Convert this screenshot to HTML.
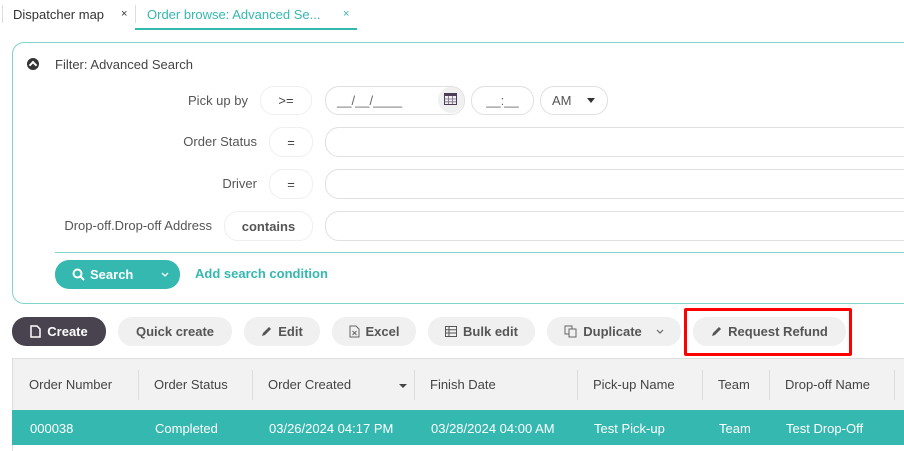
<!DOCTYPE html>
<html><head><style>
*{box-sizing:border-box;margin:0;padding:0}
body{width:904px;height:451px;overflow:hidden;background:#fff;font-family:"Liberation Sans",sans-serif;font-size:13px;color:#444;position:relative}
.a{position:absolute}
.pill{position:absolute;border:1px solid #e0e0e0;border-radius:14px;background:#fff;display:flex;align-items:center;justify-content:center}
.op{border-color:#efefef}
.lbl{position:absolute;text-align:right;color:#555;font-size:13px}
.btn{position:absolute;top:317px;height:29px;border-radius:14px;background:#f0f0f0;color:#555;font-weight:bold;display:flex;align-items:center;justify-content:center;font-size:13px}
.btn svg{margin-right:6px}
.th{position:absolute;top:377px;font-size:13px;color:#444}
.td{position:absolute;top:421px;font-size:13px;color:#fff}
.vd{position:absolute;top:370px;width:1px;height:30px;background:#ddd}
</style></head><body>
<div class="a" style="left:2px;top:5px;width:1px;height:18px;background:#ddd"></div>
<div class="a" style="left:13px;top:7px;color:#333">Dispatcher map</div>
<div class="a" style="left:121px;top:8px;font-size:11px;color:#333">×</div>
<div class="a" style="left:135px;top:5px;width:1px;height:18px;background:#ddd"></div>
<div class="a" style="left:147px;top:7px;color:#35b8b0">Order browse: Advanced Se...</div>
<div class="a" style="left:343px;top:8px;font-size:11px;color:#35b8b0">×</div>
<div class="a" style="left:135px;top:28px;width:222px;height:2px;background:#35b8b0"></div>

<div class="a" style="left:12px;top:42px;width:920px;height:262px;border:1px solid #7fd4cc;border-radius:12px"></div>
<div class="a" style="left:27px;top:58px;width:12px;height:12px;border-radius:50%;background:#333"></div>
<div class="a" style="left:30px;top:62px;width:6px;height:6px;border-left:2px solid #fff;border-top:2px solid #fff;transform:rotate(45deg)"></div>
<div class="a" style="left:55px;top:57px;color:#444">Filter: Advanced Search</div>

<div class="lbl" style="left:100px;width:148px;top:93px">Pick up by</div>
<div class="pill op" style="left:260px;top:86px;width:52px;height:29px;color:#444">&gt;=</div>
<div class="pill" style="left:325px;top:86px;width:140px;height:29px;justify-content:flex-start;padding-left:11px;color:#666">__/__/____</div>
<div class="a" style="left:438px;top:87px;width:26px;height:26px;border-radius:50%;background:#f0f0f0"></div>
<svg class="a" style="left:444px;top:92px" width="13" height="13" viewBox="0 0 13 13"><rect x="0.5" y="1.5" width="12" height="11" fill="none" stroke="#4a3d55"/><rect x="0.5" y="1.5" width="12" height="2.5" fill="#4a3d55"/><path d="M4.5 4v8M8.5 4v8M1 7h11M1 9.8h11" stroke="#7a6a85" stroke-width="0.8"/></svg>
<div class="pill" style="left:471px;top:86px;width:63px;height:29px;color:#666">__:__</div>
<div class="pill" style="left:540px;top:86px;width:68px;height:29px;justify-content:flex-start;padding-left:11px;color:#555">AM</div>
<div class="a" style="left:587px;top:98px;border:4px solid transparent;border-top:5px solid #333"></div>

<div class="lbl" style="left:100px;width:157px;top:134px">Order Status</div>
<div class="pill op" style="left:269px;top:127px;width:44px;height:30px">=</div>
<div class="pill" style="left:325px;top:127px;width:600px;height:30px"></div>
<div class="lbl" style="left:100px;width:157px;top:176px">Driver</div>
<div class="pill op" style="left:269px;top:169px;width:44px;height:30px">=</div>
<div class="pill" style="left:325px;top:169px;width:600px;height:30px"></div>
<div class="lbl" style="left:40px;width:172px;top:218px">Drop-off.Drop-off Address</div>
<div class="pill op" style="left:224px;top:211px;width:89px;height:30px;font-weight:bold;color:#555">contains</div>
<div class="pill" style="left:325px;top:211px;width:600px;height:30px"></div>
<div class="a" style="left:55px;top:252px;width:860px;height:1px;background:#7fd4cc"></div>
<div class="a" style="left:55px;top:260px;width:125px;height:29px;border-radius:14px;background:#35b8b0;color:#fff;font-weight:bold;padding:7px 0 0 35px">Search</div>
<svg class="a" style="left:72px;top:268px" width="13" height="13" viewBox="0 0 13 13"><circle cx="5.5" cy="5.5" r="4" fill="none" stroke="#fff" stroke-width="2"/><path d="M8.5 8.5l3.5 3.5" stroke="#fff" stroke-width="2"/></svg>
<svg class="a" style="left:161px;top:272px" width="8" height="5" viewBox="0 0 8 5"><path d="M1 1l3 3 3-3" fill="none" stroke="#fff" stroke-width="1.3"/></svg>
<div class="a" style="left:195px;top:266px;color:#35b8b0;font-weight:bold">Add search condition</div>

<div class="btn" style="left:12px;width:94px;background:#48434f;color:#fff"><svg width="11" height="13" viewBox="0 0 11 13"><path d="M1 1h6l3 3v8H1z" fill="none" stroke="#fff" stroke-width="1.5"/></svg>Create</div>
<div class="btn" style="left:118px;width:114px">Quick create</div>
<div class="btn" style="left:244px;width:76px"><svg width="11" height="11" viewBox="0 0 11 11"><path d="M1 10l1-3 6-6 2 2-6 6z" fill="#555"/></svg>Edit</div>
<div class="btn" style="left:332px;width:84px"><svg width="11" height="13" viewBox="0 0 11 13"><path d="M1 1h6l3 3v8H1z" fill="none" stroke="#666"/><path d="M3.5 6l4 4M7.5 6l-4 4" stroke="#666"/></svg>Excel</div>
<div class="btn" style="left:428px;width:107px"><svg width="12" height="11" viewBox="0 0 12 11"><rect x="0.5" y="0.5" width="11" height="10" fill="none" stroke="#555"/><path d="M0.5 3.8h11M0.5 7h11M4 0.5v10" stroke="#555"/></svg>Bulk edit</div>
<div class="btn" style="left:547px;width:134px"><svg width="13" height="13" viewBox="0 0 13 13"><rect x="1" y="1" width="7" height="8" fill="none" stroke="#666"/><rect x="5" y="4" width="7" height="8" fill="#f0f0f0" stroke="#666"/></svg>Duplicate<svg style="margin-left:14px;margin-right:0" width="8" height="5" viewBox="0 0 8 5"><path d="M1 1l3 3 3-3" fill="none" stroke="#666" stroke-width="1.2"/></svg></div>
<div class="btn" style="left:693px;width:153px"><svg width="11" height="11" viewBox="0 0 11 11"><path d="M1 10l1-3 6-6 2 2-6 6z" fill="#555"/></svg>Request Refund</div>
<div class="a" style="left:684px;top:308px;width:168px;height:48px;border:3px solid #f00;border-radius:2px"></div>

<div class="a" style="left:12px;top:358px;width:892px;height:53px;background:#f2f2f2;border-top:1px solid #ddd;border-left:1px solid #ddd"></div>
<div class="a" style="left:12px;top:410px;width:892px;height:35px;background:#35b8b0"></div>
<div class="a" style="left:12px;top:445px;width:1px;height:6px;background:#ddd"></div>
<div class="th" style="left:29px">Order Number</div><div class="vd" style="left:138px"></div>
<div class="th" style="left:154px">Order Status</div><div class="vd" style="left:252px"></div>
<div class="th" style="left:268px">Order Created</div><div class="a" style="left:399px;top:384px;border:4px solid transparent;border-top:4px solid #444"></div><div class="vd" style="left:414px"></div>
<div class="th" style="left:430px">Finish Date</div><div class="vd" style="left:577px"></div>
<div class="th" style="left:593px">Pick-up Name</div><div class="vd" style="left:702px"></div>
<div class="th" style="left:718px">Team</div><div class="vd" style="left:769px"></div>
<div class="th" style="left:785px">Drop-off Name</div><div class="vd" style="left:894px"></div>
<div class="td" style="left:30px">000038</div>
<div class="td" style="left:155px">Completed</div>
<div class="td" style="left:269px">03/26/2024 04:17 PM</div>
<div class="td" style="left:431px">03/28/2024 04:00 AM</div>
<div class="td" style="left:594px">Test Pick-up</div>
<div class="td" style="left:719px">Team</div>
<div class="td" style="left:786px">Test Drop-Off</div>
</body></html>
